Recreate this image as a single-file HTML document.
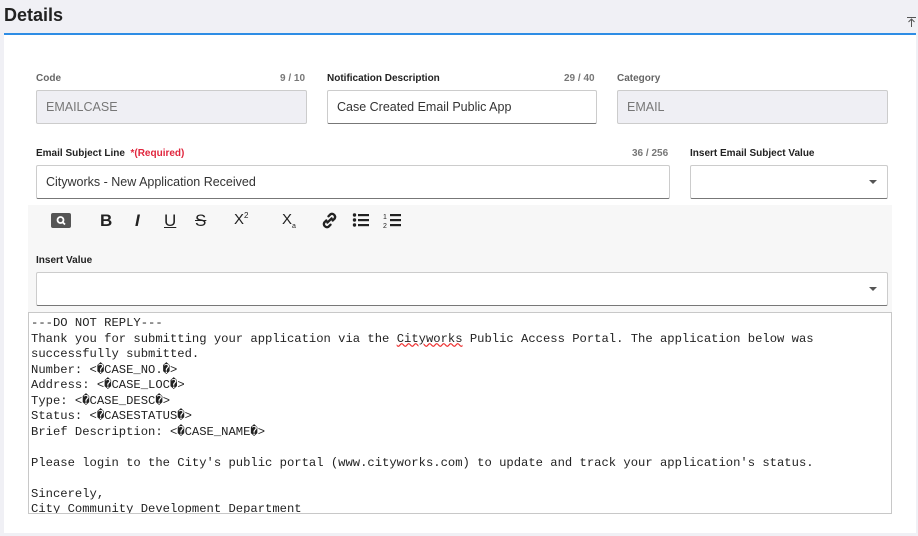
<!DOCTYPE html>
<html><head><style>
*{margin:0;padding:0;box-sizing:border-box}
body{width:918px;height:536px;background:#f0f0f5;font-family:"Liberation Sans",sans-serif;position:relative;overflow:hidden}
.a{position:absolute}
.h{left:4px;top:5px;font-size:18px;font-weight:bold;color:#222}
.panel{left:4px;top:33px;width:912px;height:500px;background:#fff;border-top:2px solid #2e8de5}
.lbl{font-size:10px;font-weight:bold;color:#222}
.lg{color:#666}
.cnt{font-size:10px;font-weight:bold;color:#777}
.inp{height:34px;border:1px solid #ccc;border-bottom:1px solid #777;background:#fff;font-size:12.5px;color:#333;padding:9px 9px;border-radius:2px}
.dis{background:#efeff4;border:1px solid #ccc;color:#777}
.tb{left:28px;top:205px;width:864px;height:107px;background:#f7f7f7}
.ic{position:absolute;top:211px;font-size:17px;color:#222}
.ta{left:28px;top:312px;width:864px;height:202px;border:1px solid #c8c8c8;background:#fff;font-family:"Liberation Mono",monospace;font-size:12.2px;line-height:15.5px;color:#222;padding:3px 2px;white-space:pre;overflow:hidden}
.car{position:absolute;right:10px;top:14px;width:0;height:0;border-left:4px solid transparent;border-right:4px solid transparent;border-top:4px solid #555}
</style></head><body>
<div class="a h">Details</div>
<div class="a" style="left:907px;top:14px"><svg width="9" height="10" fill="none" stroke="#555" stroke-width="1"><path d="M0 .5h9M4.5 2v8M1.5 5l3-3 3 3"/></svg></div>
<div class="a panel"></div>

<div class="a lbl lg" style="left:36px;top:73px">Code</div>
<div class="a cnt" style="left:280px;top:73px">9 / 10</div>
<div class="a inp dis" style="left:36px;top:90px;width:271px">EMAILCASE</div>

<div class="a lbl" style="left:327px;top:73px">Notification Description</div>
<div class="a cnt" style="left:564px;top:73px">29 / 40</div>
<div class="a inp" style="left:327px;top:90px;width:270px">Case Created Email Public App</div>

<div class="a lbl lg" style="left:617px;top:73px">Category</div>
<div class="a inp dis" style="left:617px;top:90px;width:271px">EMAIL</div>

<div class="a lbl" style="left:36px;top:148px">Email Subject Line <span style="color:#e0263d">&nbsp;*(Required)</span></div>
<div class="a cnt" style="left:632px;top:148px">36 / 256</div>
<div class="a inp" style="left:36px;top:165px;width:634px">Cityworks - New Application Received</div>

<div class="a lbl" style="left:690px;top:148px">Insert Email Subject Value</div>
<div class="a inp" style="left:690px;top:165px;width:198px"><div class="car"></div></div>

<div class="a tb"></div>
<div class="a" style="left:51px;top:213px;width:20px;height:15px;background:#555;border-radius:2px"><svg width="20" height="15" fill="none" stroke="#fff" stroke-width="1.8"><circle cx="9.5" cy="7" r="3"/><path d="M11.7 9.2l2.3 2.3"/></svg></div>
<div class="ic" style="left:100px;font-weight:bold">B</div>
<div class="ic" style="left:135px;font-style:italic;font-weight:bold">I</div>
<div class="ic" style="left:164px;text-decoration:underline">U</div>
<div class="ic" style="left:195px;text-decoration:line-through">S</div>
<div class="ic" style="left:234px;font-size:15px;top:211px">X<sup style="font-size:8px">2</sup></div>
<div class="ic" style="left:282px;font-size:15px;top:211px">X<sub style="font-size:7px">a</sub></div>
<div class="ic" style="left:320px;top:211px"><svg width="19" height="19" viewBox="0 0 18 18" fill="none" stroke="#222" stroke-width="2.2" stroke-linecap="round"><path d="M8 5l2-2a3 3 0 014 4l-2 2M10 13l-2 2a3 3 0 01-4-4l2-2M7 11l4-4"/></svg></div>
<div class="ic" style="left:352px;top:212px"><svg width="18" height="16"><g fill="#222"><circle cx="2.5" cy="3" r="1.7"/><circle cx="2.5" cy="8" r="1.7"/><circle cx="2.5" cy="13" r="1.7"/><rect x="6" y="2" width="11" height="2.2"/><rect x="6" y="7" width="11" height="2.2"/><rect x="6" y="12" width="11" height="2.2"/></g></svg></div>
<div class="ic" style="left:383px;top:212px"><svg width="20" height="17"><g fill="#222"><text x="0" y="7" font-size="7" font-family="Liberation Sans">1</text><text x="0" y="16" font-size="7" font-family="Liberation Sans">2</text><rect x="7" y="2" width="11" height="2.2"/><rect x="7" y="7" width="11" height="2.2"/><rect x="7" y="12" width="11" height="2.2"/></g></svg></div>

<div class="a lbl" style="left:36px;top:255px">Insert Value</div>
<div class="a inp" style="left:36px;top:272px;width:852px"><div class="car"></div></div>

<div class="a ta">---DO NOT REPLY---
Thank you for submitting your application via the <span style="text-decoration:underline wavy #e33">Cityworks</span> Public Access Portal. The application below was
successfully submitted.
Number: &lt;�CASE_NO.�&gt;
Address: &lt;�CASE_LOC�&gt;
Type: &lt;�CASE_DESC�&gt;
Status: &lt;�CASESTATUS�&gt;
Brief Description: &lt;�CASE_NAME�&gt;

Please login to the City's public portal (www.cityworks.com) to update and track your application's status.

Sincerely,
City Community Development Department</div>
</body></html>
